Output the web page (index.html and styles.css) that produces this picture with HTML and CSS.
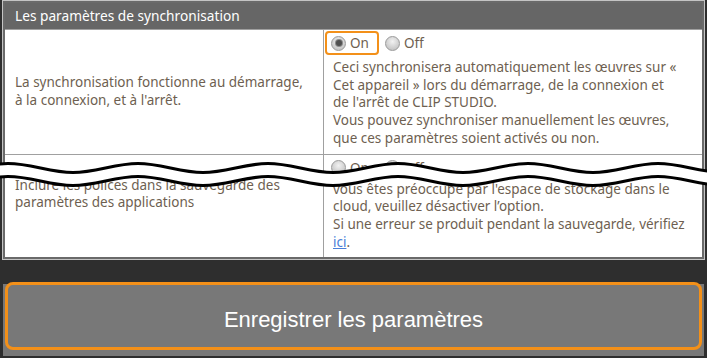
FILE: index.html
```html
<!DOCTYPE html>
<html lang="fr">
<head>
  <meta charset="UTF-8" />
  <meta name="viewport" content="width=device-width, initial-scale=1.0"/>
  <title>Paramètres de synchronisation</title>
  <link rel="stylesheet" href="styles.css">
</head>
<body>
  <div class="page">
    <div class="panel">
      <div class="panel-head">Les paramètres de synchronisation</div>

      <div class="setting">
        <div class="setting-name">La synchronisation fonctionne au démarrage,<br>à la connexion, et à l'arrêt.</div>
        <div class="setting-value">
          <div class="choices">
            <label class="choice focused"><span class="radio checked"></span>On</label>
            <label class="choice"><span class="radio"></span>Off</label>
          </div>
          <p class="note">Ceci synchronisera automatiquement les œuvres sur «<br>Cet appareil » lors du démarrage, de la connexion et<br>de l'arrêt de CLIP STUDIO.<br>Vous pouvez synchroniser manuellement les œuvres,<br>que ces paramètres soient activés ou non.</p>
        </div>
      </div>

      <div class="setting setting-cut">
        <div class="setting-name">Inclure les polices dans la sauvegarde des<br>paramètres des applications</div>
        <div class="setting-value">
          <div class="choices">
            <label class="choice"><span class="radio"></span>On</label>
            <label class="choice"><span class="radio checked"></span>Off</label>
          </div>
          <p class="note">vous êtes préoccupé par l'espace de stockage dans le<br>cloud, veuillez désactiver l’option.<br>Si une erreur se produit pendant la sauvegarde, vérifiez<br><a href="#">ici</a>.</p>
        </div>
      </div>
    </div>

    <!-- torn edge between the two cropped parts -->
    <svg class="cut-wave" viewBox="0 0 707 42" preserveAspectRatio="none">
      <defs>
        <path id="wave" fill="none" d="M-57,4.5 C-33.6,4.5 -15.4,-4.5 8,-4.5 S49.6,4.5 73,4.5 S114.6,-4.5 138,-4.5 S179.6,4.5 203,4.5 S244.6,-4.5 268,-4.5 S309.6,4.5 333,4.5 S374.6,-4.5 398,-4.5 S439.6,4.5 463,4.5 S504.6,-4.5 528,-4.5 S569.6,4.5 593,4.5 S634.6,-4.5 658,-4.5 S699.6,4.5 723,4.5 S764.6,-4.5 788,-4.5"/>
      </defs>
      <use href="#wave" y="24.5" stroke="#fff" stroke-width="13"/>
      <use href="#wave" y="18" stroke="#000" stroke-width="3"/>
      <use href="#wave" y="31" stroke="#000" stroke-width="3"/>
    </svg>

    <button class="save-btn">Enregistrer les paramètres</button>
  </div>
</body>
</html>
```

FILE: styles.css
```css
html, body {
  margin: 0;
  height: 100%;
  overflow: hidden;
}
body {
  background: #2e2e2e;
  font-family: "Noto Sans", "Open Sans", sans-serif;
  font-size: 13.5px;
  color: #6e5f51;
}
.page {
  position: relative;
  padding-top: 1px;
}
.panel {
  margin: 0 3px;
  border: 2px solid #6a6a6a;
  box-shadow: 0 0 0 1px #c4c4c4;
  background: #fff;
}
.panel-head {
  height: 26px;
  line-height: 26px;
  padding-left: 10px;
  background: #666;
  color: #fff;
  font-size: 13.7px;
  border-bottom: 1px solid #a0a0a0;
}
.setting {
  display: grid;
  grid-template-columns: 319px 1fr;
  border-bottom: 1px solid #a0a0a0;
}
.setting:last-child {
  border-bottom: none;
}
.setting-name {
  display: flex;
  align-items: center;
  padding-left: 10px;
  border-right: 1px solid #a0a0a0;
  line-height: 17.7px;
}
.setting-value {
  padding: 1px 0 6px 1px;
}
.choices {
  display: flex;
  height: 24px;
}
.choice {
  display: flex;
  align-items: center;
  gap: 4px;
  padding: 0 8px 0 4px;
  border: 2px solid transparent;
  border-radius: 4px;
}
.choice.focused {
  border-color: #f39019;
}
.radio {
  position: relative;
  width: 13px;
  height: 13px;
  border: 1px solid #9a9a9a;
  border-radius: 50%;
  background: radial-gradient(circle at 50% 35%, #f2f2f2, #c6c6c6 75%);
}
.radio.checked::after {
  content: "";
  position: absolute;
  left: 3.5px;
  top: 3.5px;
  width: 6px;
  height: 6px;
  border-radius: 50%;
  background: #505050;
  box-shadow: 0 0 0 1px #8a8a8a;
}
.note {
  margin: 4px 0 0;
  padding-left: 8px;
  line-height: 17.7px;
  white-space: nowrap;
}
.note a {
  color: #4a7fd8;
}

.setting-cut .setting-name {
  align-items: flex-start;
  padding-top: 22px;
}
.setting-cut .note {
  margin-top: 1px;
}

.cut-wave {
  position: absolute;
  left: 0;
  top: 150px;
  width: 707px;
  height: 42px;
}

.save-btn {
  position: relative;
  display: block;
  width: 701px;
  height: 72px;
  margin: 25px 3px 0;
  border: none;
  background: #787878;
  color: #fff;
  font-family: "Liberation Sans", Arial, sans-serif;
  font-size: 22px;
  cursor: pointer;
}
.save-btn::after {
  content: "";
  position: absolute;
  top: -2px;
  left: 2px;
  right: 2px;
  bottom: 6px;
  border: 3px solid #f39019;
  border-radius: 8px;
}
```
